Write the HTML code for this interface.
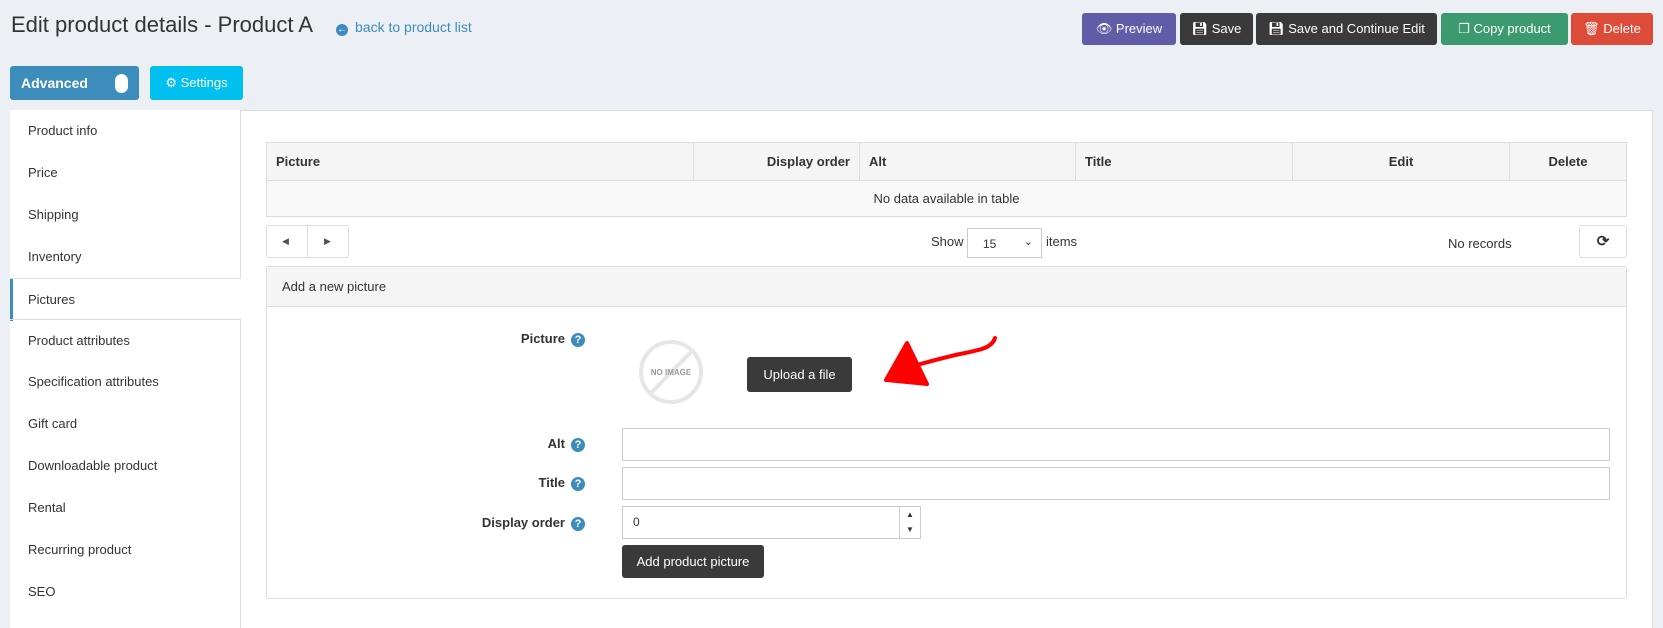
<!DOCTYPE html>
<html><head><meta charset="utf-8"><style>
*{box-sizing:border-box;margin:0;padding:0}
body{width:1663px;height:628px;overflow:hidden;background:#ecf0f5;font-family:"Liberation Sans",sans-serif;font-size:13px;color:#333;position:relative}
.a{position:absolute}
.btn{position:absolute;color:#fff;border-radius:3px;font-size:13px;display:flex;align-items:center;justify-content:center;gap:7px}
.nav div{position:absolute;left:0;width:231px;height:42px;padding-left:18px;line-height:42px;font-size:13px;color:#333}
.th{position:absolute;top:0;height:37px;line-height:37px;font-weight:bold;border-right:1px solid #ddd;padding:0 9px}
.lbl{position:absolute;right:1078px;font-weight:bold;font-size:13px}
.q{display:inline-block;width:14px;height:14px;border-radius:50%;background:#3c8dbc;color:#fff;font-size:11px;line-height:14px;text-align:center;font-weight:bold;margin-left:6px}
.inp{position:absolute;left:622px;background:#fff;border:1px solid #ccc}
</style></head><body>
<div class="a" style="left:11px;top:12px;font-size:22px;color:#333">Edit product details - Product A</div>
<div class="a" style="left:336px;top:19px;color:#3c8dbc;font-size:14px"><span style="display:inline-block;width:12px;height:12px;border-radius:50%;background:#3c8dbc;color:#fff;font-size:10px;line-height:12px;text-align:center;margin-right:7px">&#8592;</span>back to product list</div>

<div class="btn" style="left:1082px;top:13px;width:94px;height:32px;background:#605ca8">&#128065;&#xFE0E; Preview</div>
<div class="btn" style="left:1180px;top:13px;width:73px;height:32px;background:#3a3a3a">&#128190;&#xFE0E; Save</div>
<div class="btn" style="left:1256px;top:13px;width:181px;height:32px;background:#3a3a3a">&#128190;&#xFE0E; Save and Continue Edit</div>
<div class="btn" style="left:1441px;top:13px;width:127px;height:32px;background:#3c9a70">&#10064; Copy product</div>
<div class="btn" style="left:1571px;top:13px;width:82px;height:32px;background:#dd4b39">&#128465;&#xFE0E; Delete</div>

<div class="btn" style="left:10px;top:66px;width:129px;height:34px;background:#3c8dbc;justify-content:flex-start;padding-left:11px;font-weight:bold;font-size:14px">Advanced<span style="position:absolute;right:11px;top:8px;width:13px;height:19px;border-radius:7px;background:#fff"></span></div>
<div class="btn" style="left:150px;top:66px;width:93px;height:34px;background:#00c0ef">&#9881; Settings</div>

<div class="a nav" style="left:10px;top:110px;width:231px;height:518px;background:#fff">
<div style="top:0;border-right:1px solid #ddd">Product info</div>
<div style="top:42px;border-right:1px solid #ddd">Price</div>
<div style="top:84px;border-right:1px solid #ddd">Shipping</div>
<div style="top:126px;border-right:1px solid #ddd;border-bottom:1px solid #ddd;height:43px">Inventory</div>
<div style="top:169px;border-left:3px solid #3c8dbc;padding-left:15px;width:232px">Pictures</div>
<div style="top:209px;border-top:1px solid #ddd;border-right:1px solid #ddd">Product attributes</div>
<div style="top:251px;border-right:1px solid #ddd">Specification attributes</div>
<div style="top:293px;border-right:1px solid #ddd">Gift card</div>
<div style="top:335px;border-right:1px solid #ddd">Downloadable product</div>
<div style="top:377px;border-right:1px solid #ddd">Rental</div>
<div style="top:419px;border-right:1px solid #ddd">Recurring product</div>
<div style="top:461px;border-right:1px solid #ddd;height:57px">SEO</div>
</div>

<div class="a" style="left:241px;top:110px;width:1412px;height:518px;background:#fff;border-top:1px solid #ddd;border-right:1px solid #ddd"></div>

<div class="a" style="left:266px;top:142px;width:1361px;height:75px;border:1px solid #ddd;background:#f5f5f5">
<div class="th" style="left:0;width:427px">Picture</div>
<div class="th" style="left:427px;width:166px;text-align:right">Display order</div>
<div class="th" style="left:593px;width:216px">Alt</div>
<div class="th" style="left:809px;width:217px">Title</div>
<div class="th" style="left:1026px;width:217px;text-align:center">Edit</div>
<div class="th" style="left:1243px;width:116px;text-align:center;border:0">Delete</div>
<div class="a" style="left:0;top:37px;width:1359px;height:36px;border-top:1px solid #ddd;background:#f9f9f9;line-height:36px;text-align:center">No data available in table</div>
</div>

<div class="a" style="left:266px;top:225px;width:83px;height:33px;border:1px solid #ddd;border-radius:3px;font-size:9px;color:#555">
<span class="a" style="left:15px;top:10px">&#9664;</span><span class="a" style="left:40px;top:0;height:31px;border-left:1px solid #ddd"></span><span class="a" style="left:57px;top:10px">&#9654;</span></div>
<div class="a" style="left:931px;top:234px">Show</div>
<div class="a" style="left:967px;top:228px;width:75px;height:30px;border:1px solid #ccc;font-size:12px;padding:8px 0 0 15px">15<span class="a" style="right:8px;top:6px;font-size:11px">&#8964;</span></div>
<div class="a" style="left:1046px;top:234px">items</div>
<div class="a" style="left:1448px;top:236px">No records</div>
<div class="a" style="left:1579px;top:225px;width:48px;height:33px;border:1px solid #ddd;border-radius:3px;text-align:center;line-height:31px;font-size:15px;font-weight:bold">&#10227;</div>

<div class="a" style="left:266px;top:266px;width:1361px;height:333px;border:1px solid #ddd;border-radius:3px">
<div style="height:40px;background:#f5f5f5;border-bottom:1px solid #ddd;line-height:40px;padding-left:15px">Add a new picture</div>
</div>

<div class="lbl" style="top:331px">Picture<span class="q">?</span></div>
<div class="lbl" style="top:436px">Alt<span class="q">?</span></div>
<div class="lbl" style="top:475px">Title<span class="q">?</span></div>
<div class="lbl" style="top:515px">Display order<span class="q">?</span></div>

<svg class="a" style="left:638px;top:339px" width="66" height="66" viewBox="0 0 66 66"><circle cx="33" cy="33" r="30" fill="none" stroke="#e6e6e6" stroke-width="4"/><line x1="12" y1="55" x2="54" y2="12" stroke="#e6e6e6" stroke-width="4"/><text x="33" y="36" font-size="8" font-family="Liberation Sans" fill="#999" text-anchor="middle" font-weight="bold">NO IMAGE</text></svg>
<div class="btn" style="left:747px;top:357px;width:105px;height:35px;background:#3a3a3a;font-size:13px">Upload a file</div>
<svg class="a" style="left:880px;top:330px" width="120" height="70" viewBox="0 0 120 70"><path d="M115 8 C112 18 100 20 80 24 C62 28 48 32 37 35" stroke="#f00" stroke-width="4" fill="none" stroke-linecap="round"/><path d="M27 13 L6 50 L47 54 Z" fill="#f00" stroke="#f00" stroke-width="4" stroke-linejoin="round"/></svg>

<div class="inp" style="top:428px;width:988px;height:33px"></div>
<div class="inp" style="top:467px;width:988px;height:33px"></div>
<div class="inp" style="top:506px;width:299px;height:33px;padding:8px 10px;font-size:12px">0<span class="a" style="right:0;top:0;width:21px;height:31px;border-left:1px solid #ccc;font-size:8px;text-align:center;line-height:15px">&#9650;<br>&#9660;</span></div>
<div class="btn" style="left:622px;top:545px;width:142px;height:33px;background:#3a3a3a">Add product picture</div>
</body></html>
